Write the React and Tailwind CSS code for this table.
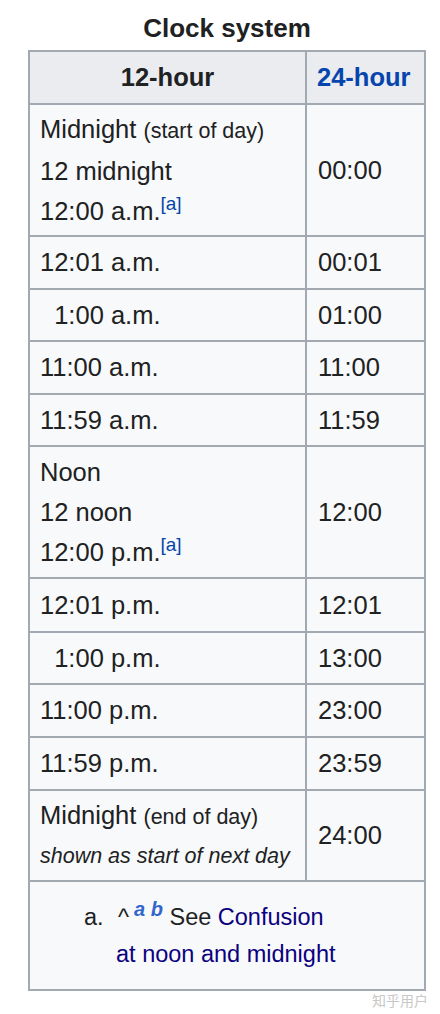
import React from "react";

const rows = [
  { h: "h-[132px]", left: "midnightStart", right: "00:00" },
  { h: "h-[53px]", left: "12:01 a.m.", right: "00:01" },
  { h: "h-[52px]", left: "\u20071:00 a.m.", right: "01:00" },
  { h: "h-[53px]", left: "11:00 a.m.", right: "11:00" },
  { h: "h-[52px]", left: "11:59 a.m.", right: "11:59" },
  { h: "h-[132px]", left: "noon", right: "12:00" },
  { h: "h-[54px]", left: "12:01 p.m.", right: "12:01" },
  { h: "h-[52px]", left: "\u20071:00 p.m.", right: "13:00" },
  { h: "h-[53px]", left: "11:00 p.m.", right: "23:00" },
  { h: "h-[53px]", left: "11:59 p.m.", right: "23:59" },
  { h: "h-[91px]", left: "midnightEnd", right: "24:00" },
];

const Ref = () => (
  <span className="text-[19px] text-[#0645ad] relative top-[-10px] leading-none">[a]</span>
);

const LeftCell = ({ kind }) => {
  if (kind === "midnightStart") {
    return (
      <div className="leading-[40px]">
        <div>
          Midnight <span className="text-[21.5px]">(start of day)</span>
        </div>
        <div>12 midnight</div>
        <div>
          12:00 a.m.
          <Ref />
        </div>
      </div>
    );
  }
  if (kind === "noon") {
    return (
      <div className="leading-[40px]">
        <div>Noon</div>
        <div>12 noon</div>
        <div>
          12:00 p.m.
          <Ref />
        </div>
      </div>
    );
  }
  if (kind === "midnightEnd") {
    return (
      <div className="leading-[39px]">
        <div>
          Midnight <span className="text-[21.5px]">(end of day)</span>
        </div>
        <div className="italic text-[21.5px]">shown as start of next day</div>
      </div>
    );
  }
  return <div className="whitespace-pre">{kind}</div>;
};

export default function App() {
  return (
    <div
      className="min-h-screen bg-white text-[#202122]"
      style={{ fontFamily: '"Liberation Sans", Arial, sans-serif' }}
    >
      <div className="w-[398px] ml-[28px] pt-[11px] mb-[5px] text-center text-[26px] font-bold leading-[34px]">
        Clock system
      </div>

      <div className="ml-[28px] w-[398px] border-2 border-[#a2a9b1] text-[25.5px]">
        {/* header */}
        <div className="flex h-[51px] bg-[#eaecf0] font-bold">
          <div className="w-[277px] border-r-2 border-[#a2a9b1] flex items-center justify-center">
            12-hour
          </div>
          <div className="flex-1 flex items-center pl-[10px] text-[#0645ad]">24-hour</div>
        </div>

        {rows.map((r, i) => (
          <div
            key={i}
            className={`flex box-border ${r.h} border-t-2 border-[#a2a9b1] bg-[#f8f9fa]`}
          >
            <div className="w-[277px] border-r-2 border-[#a2a9b1] flex items-center pl-[10px]">
              <LeftCell kind={r.left} />
            </div>
            <div className="flex-1 flex items-center pl-[11px]">{r.right}</div>
          </div>
        ))}

        {/* footnote */}
        <div className="flex items-center h-[109px] border-t-2 border-[#a2a9b1] bg-[#f8f9fa] pl-[54px] text-[23.5px] leading-[37px]">
          <div className="flex">
            <div className="w-[32px]">a.</div>
            <div>
              <div>
                <span className="mr-[7px] relative left-[2px]">^</span>
                <span className="text-[20px] font-bold italic text-[#3366cc] leading-none relative top-[-9px]">
                  a b
                </span>{" "}
                See <span className="text-[#0b0080]">Confusion</span>
              </div>
              <div className="text-[#0b0080]">at noon and midnight</div>
            </div>
          </div>
        </div>
      </div>

      <div
        className="text-right pr-[12px] text-[14px] text-[#c8c8c8] leading-[18px]"
        style={{ fontFamily: '"Noto Sans CJK SC", sans-serif' }}
      >
        知乎用户
      </div>
    </div>
  );
}
